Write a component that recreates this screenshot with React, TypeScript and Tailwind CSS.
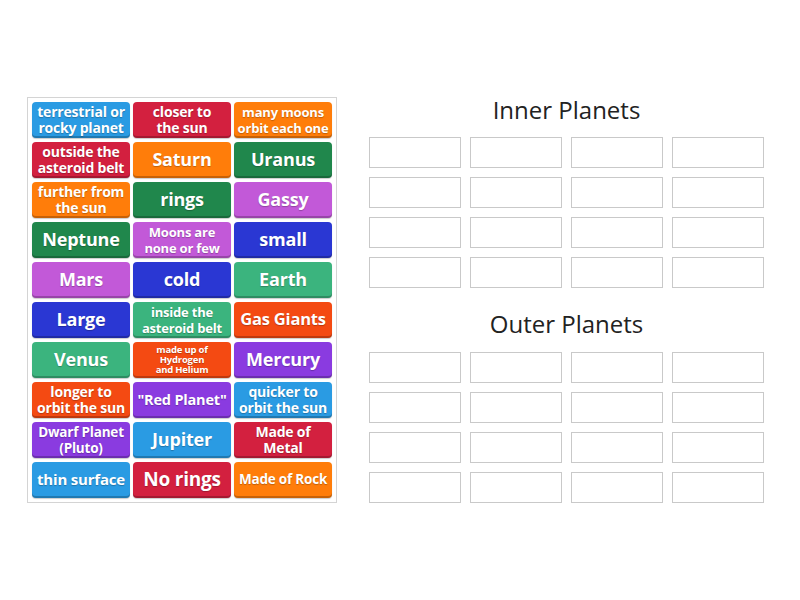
import React from "react";

const BLUE = "bg-[#2a9be3]";
const RED = "bg-[#d3203f]";
const ORANGE = "bg-[#ff7d0a]";
const DGREEN = "bg-[#20874c]";
const MAGENTA = "bg-[#c259d8]";
const DBLUE = "bg-[#2a37d3]";
const TEAL = "bg-[#3bb47e]";
const REDORANGE = "bg-[#f44a12]";
const PURPLE = "bg-[#8a3be0]";

type Tile = { text: string[]; color: string; size: string };

const two = "text-[14px] leading-[16px]";

const tiles: Tile[] = [
  { text: ["terrestrial or", "rocky planet"], color: BLUE, size: two },
  { text: ["closer to", "the sun"], color: RED, size: two },
  { text: ["many moons", "orbit each one"], color: ORANGE, size: "text-[13px] leading-[16px]" },
  { text: ["outside the", "asteroid belt"], color: RED, size: two },
  { text: ["Saturn"], color: ORANGE, size: "text-[18px]" },
  { text: ["Uranus"], color: DGREEN, size: "text-[18px]" },
  { text: ["further from", "the sun"], color: ORANGE, size: two },
  { text: ["rings"], color: DGREEN, size: "text-[18px]" },
  { text: ["Gassy"], color: MAGENTA, size: "text-[18px]" },
  { text: ["Neptune"], color: DGREEN, size: "text-[18px]" },
  { text: ["Moons are", "none or few"], color: MAGENTA, size: "text-[13px] leading-[16px]" },
  { text: ["small"], color: DBLUE, size: "text-[18px]" },
  { text: ["Mars"], color: MAGENTA, size: "text-[18px]" },
  { text: ["cold"], color: DBLUE, size: "text-[18px]" },
  { text: ["Earth"], color: TEAL, size: "text-[18px]" },
  { text: ["Large"], color: DBLUE, size: "text-[18px]" },
  { text: ["inside the", "asteroid belt"], color: TEAL, size: "text-[13px] leading-[16px]" },
  { text: ["Gas Giants"], color: REDORANGE, size: "text-[16.5px]" },
  { text: ["Venus"], color: TEAL, size: "text-[18px]" },
  { text: ["made up of", "Hydrogen", "and Helium"], color: REDORANGE, size: "text-[9.5px] leading-[10px]" },
  { text: ["Mercury"], color: PURPLE, size: "text-[18px]" },
  { text: ["longer to", "orbit the sun"], color: REDORANGE, size: two },
  { text: ['"Red Planet"'], color: PURPLE, size: "text-[14.5px]" },
  { text: ["quicker to", "orbit the sun"], color: BLUE, size: two },
  { text: ["Dwarf Planet", "(Pluto)"], color: PURPLE, size: "text-[13.5px] leading-[16px]" },
  { text: ["Jupiter"], color: BLUE, size: "text-[18px]" },
  { text: ["Made of", "Metal"], color: RED, size: two },
  { text: ["thin surface"], color: BLUE, size: "text-[15px]" },
  { text: ["No rings"], color: RED, size: "text-[19px]" },
  { text: ["Made of Rock"], color: ORANGE, size: "text-[13.5px]" },
];

const Slots = () => (
  <div className="grid grid-cols-[repeat(4,92px)] gap-x-[9px] gap-y-[9px]">
    {Array.from({ length: 16 }).map((_, i) => (
      <div key={i} className="h-[31px] border border-[#c9c9c9] bg-white" />
    ))}
  </div>
);

const App = () => {
  return (
    <div className="flex h-[600px] w-[800px] items-start bg-white pl-[27px] pt-[93px] font-['Open_Sans',sans-serif]">
      <div className="mt-[4px] border border-[#d4d4d4] bg-white p-[4px]">
        <div className="grid grid-cols-[repeat(3,98px)] gap-x-[3px] gap-y-[4px]">
          {tiles.map((t, i) => (
            <div
              key={i}
              className={`flex h-[36px] items-center justify-center rounded-[4px] pb-[1px] ${t.color} text-center font-bold tracking-[-0.2px] text-white shadow-[inset_0_-2px_0_rgba(0,0,0,0.22),0_1px_1px_rgba(0,0,0,0.2)] [text-shadow:0_1px_1px_rgba(0,0,0,0.25)] ${t.size}`}
            >
              <p className="whitespace-nowrap">
                {t.text.map((line, j) => (
                  <React.Fragment key={j}>
                    {j > 0 && <br />}
                    {line}
                  </React.Fragment>
                ))}
              </p>
            </div>
          ))}
        </div>
      </div>
      <div className="ml-[32px] flex flex-col items-center">
        <div className="text-[24px] leading-[33px] text-[#222]">Inner Planets</div>
        <div className="mt-[11px]">
          <Slots />
        </div>
        <div className="mt-[19px] text-[24px] leading-[33px] text-[#222]">Outer Planets</div>
        <div className="mt-[12px]">
          <Slots />
        </div>
      </div>
    </div>
  );
};

export default App;
